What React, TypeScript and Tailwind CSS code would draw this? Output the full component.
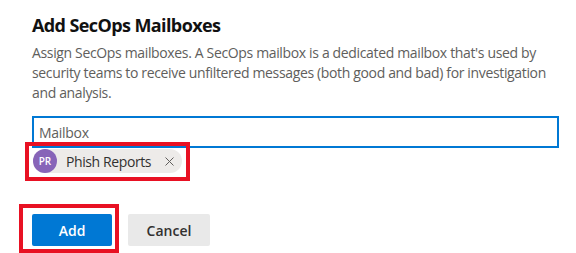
import React from "react";

export default function App() {
  return (
    <div
      className="relative w-[576px] h-[253px] bg-white overflow-hidden"
      style={{ fontFamily: '"Open Sans", "Noto Sans", sans-serif' }}
    >
      <div className="pl-8 pt-[13px]">
        <h1 className="text-[18px] leading-[24px] font-bold text-[#111] tracking-[-0.6px]">Add SecOps Mailboxes</h1>
        <p className="mt-[6px] text-[14px] leading-[20px] text-[#605e5c] tracking-[-0.35px]">
          Assign SecOps mailboxes. A SecOps mailbox is a dedicated mailbox that's used by
          <br />
          security teams to receive unfiltered messages (both good and bad) for investigation
          <br />
          and analysis.
        </p>
        <div className="mt-[13px] w-[527px] h-[32px] border-2 border-[#0078d4] flex items-center pl-[5px]">
          <span className="text-[14px] text-[#605e5c] tracking-[-0.3px]">Mailbox</span>
        </div>
        <div className="mt-px ml-px flex">
          <div className="flex items-center h-[24px] rounded-full bg-[#edebe9] pr-[8px]">
            <div className="w-[24px] h-[24px] rounded-full bg-[#8764b8] flex items-center justify-center text-white text-[10px] font-semibold">
              PR
            </div>
            <span className="ml-[9px] text-[14px] text-[#323130] tracking-[-0.4px]">Phish Reports</span>
            <svg className="ml-[14px]" width="9" height="9" viewBox="0 0 9 9">
              <path d="M0.5 0.5 L8.5 8.5 M8.5 0.5 L0.5 8.5" stroke="#605e5c" strokeWidth="1" />
            </svg>
          </div>
        </div>
        <div className="mt-[41px] flex gap-4">
          <button className="w-[80px] h-[32px] rounded-[2px] bg-[#0078d4] text-white text-[14px] font-semibold">
            Add
          </button>
          <button className="w-[82px] h-[32px] rounded-[2px] bg-[#e9e9e9] text-[#323130] text-[14px] font-semibold">
            Cancel
          </button>
        </div>
      </div>
      <div className="absolute left-[25px] top-[142px] w-[165px] h-[39px] border-4 border-[#e81123]" />
      <div className="absolute left-[19px] top-[204px] w-[100px] h-[49px] border-4 border-[#e81123]" />
    </div>
  );
}
